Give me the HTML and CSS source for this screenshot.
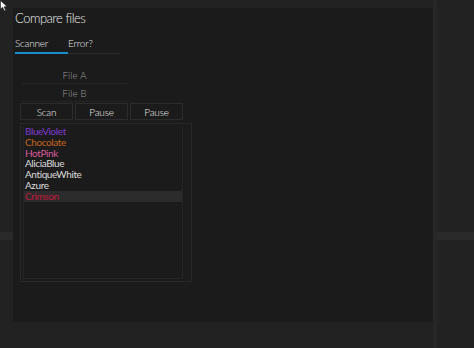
FILE: index.html
```html
<!DOCTYPE html>
<html lang="en">
<head>
    <meta charset="UTF-8">
    <title>Compare files</title>
    <link rel="stylesheet" href="styles.css">
</head>
<body>
    <svg class="cursor" width="9" height="12" viewBox="0 0 9 12"><path d="M0.5 0.5 L0.5 9 L2.6 7.2 L4.2 10.8 L5.6 10.2 L4 6.8 L7 6.6 Z" fill="#fff" stroke="#222" stroke-width="0.6"/></svg>

    <div class="window">
        <h1 class="title">Compare files</h1>

        <div class="tabs">
            <span class="tab active">Scanner</span>
            <span class="tab">Error?</span>
        </div>

        <div class="fields">
            <input class="field" type="text" placeholder="File A">
            <input class="field" type="text" placeholder="File B">
        </div>

        <div class="buttons">
            <button>Scan</button>
            <button>Pause</button>
            <button>Pause</button>
        </div>

        <div class="listwrap">
            <ul class="list">
                <li style="color:#7e3ad0">BlueViolet</li>
                <li style="color:#c36420">Chocolate</li>
                <li style="color:#d85a9c">HotPink</li>
                <li>AliciaBlue</li>
                <li>AntiqueWhite</li>
                <li>Azure</li>
                <li class="selected" style="color:#c0183c">Crimson</li>
            </ul>
        </div>
    </div>
</body>
</html>
```

FILE: styles.css
```css
*{
    margin: 0;
    padding: 0;
    box-sizing: border-box;
    font-family: 'Lato', sans-serif;
    font-weight: 300;
}

body{
    width: 474px;
    height: 348px;
    overflow: hidden;
    background-color: #222;
    background-image:
        linear-gradient(90deg, transparent 433px, #272727 433px, #272727 437px, transparent 437px),
        linear-gradient(180deg, transparent 232px, #2a2a2a 232px, #2a2a2a 240px, transparent 240px);
    padding: 8px 0 0 13px;
}

.cursor{
    position: absolute;
    left: 0;
    top: 0;
}

.window{
    width: 420px;
    height: 314px;
    background-color: #1b1b1b;
    padding: 2px 2px 0;
}

.title{
    font-size: 13px;
    line-height: 16px;
    color: #ececec;
    letter-spacing: -0.5px;
}

.tabs{
    display: flex;
    width: 105px;
    margin-top: 11px;
    border-bottom: 1px solid #2a2a2a;
}

.tab{
    font-size: 10px;
    line-height: 12px;
    color: #e8e8e8;
    padding-bottom: 3px;
    letter-spacing: -0.2px;
}

.tab.active{
    width: 53px;
    border-bottom: 2px solid #1a8ccc;
    margin-bottom: -1px;
}

.fields{
    display: flex;
    flex-direction: column;
    width: 105px;
    margin: 12px 0 0 7px;
}

.field{
    height: 18px;
    border: 0;
    outline: 0;
    border-bottom: 1px solid #262626;
    background: transparent;
    text-align: center;
    font-size: 10px;
    color: #ccc;
}

.field::placeholder{
    color: #999;
}

.buttons{
    display: flex;
    gap: 2px;
    margin: 1px 0 0 5px;
}

.buttons button{
    width: 53px;
    height: 17px;
    background: #1b1b1b;
    border: 1px solid #2c2c2c;
    color: #ececec;
    font-size: 10px;
    letter-spacing: -0.2px;
}

.listwrap{
    width: 172px;
    height: 159px;
    margin: 3px 0 0 5px;
    border: 1px solid #282828;
    padding: 2px 8px 2px 2px;
}

.list{
    list-style: none;
    height: 100%;
    border: 1px solid #252525;
    border-top: 0;
}

.list li{
    font-size: 10px;
    font-weight: 400;
    line-height: 10.8px;
    color: #dcdcdc;
    padding-left: 1px;
    letter-spacing: -0.4px;
}

.list li.selected{
    background-color: #2c2c2c;
}
```
